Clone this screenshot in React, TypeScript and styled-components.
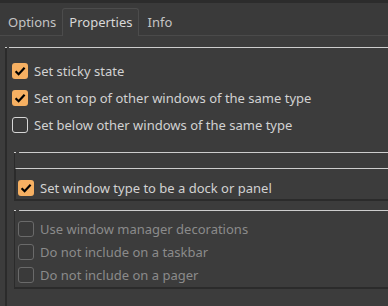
import React from 'react';
import styled, { createGlobalStyle } from 'styled-components';

const GlobalStyle = createGlobalStyle`
  html, body {
    margin: 0;
    padding: 0;
    background: #3c3c3c;
  }
  body {
    font-family: 'Noto Sans', 'Open Sans', sans-serif;
    font-size: 13px;
  }
`;

const light = '#cdcdcd';
const dark = '#2b2b2b';

const Window = styled.div`
  width: 388px;
  height: 306px;
  overflow: hidden;
  background: #3c3c3c;
`;

const TopBand = styled.div`
  height: 3px;
  background: #2c2c2c;
`;

const TabBar = styled.div`
  height: 32px;
  display: flex;
  align-items: flex-end;
  background: #3a3a3a;
  border-bottom: 1px solid #4a4a4a;
`;

const Tab = styled.div<{ $active?: boolean }>`
  box-sizing: border-box;
  height: ${(p) => (p.$active ? '28px' : '27px')};
  margin-bottom: ${(p) => (p.$active ? '-1px' : '0')};
  padding: ${(p) => (p.$active ? '0 6px 1px 6px' : '0 5px 0 7px')};
  display: flex;
  align-items: center;
  color: ${(p) => (p.$active ? '#d8d8d8' : '#c4c4c4')};
  background: ${(p) => (p.$active ? '#3c3c3c' : 'transparent')};
  border: ${(p) => (p.$active ? '1px solid #4c4c4c' : '1px solid transparent')};
  border-bottom: none;
  border-radius: 3px 3px 0 0;
`;

const Content = styled.div`
  padding: 11px 0 0 5px;
`;

const FrameTop = styled.div<{ $gap?: number }>`
  display: flex;
  height: 1px;
  gap: ${(p) => p.$gap ?? 2}px;
`;

const Dash = styled.div`
  width: 2px;
  background: ${light};
`;

const Line = styled.div`
  flex: 1;
  background: ${light};
`;

const OuterBody = styled.div`
  border-left: 2px solid ${dark};
  padding: 9px 0 0 5px;
  height: 300px;
`;

const SubFrame = styled.div<{ $top: number }>`
  margin: ${(p) => p.$top}px 0 0 2px;
`;

const SubBody = styled.div<{ $bottom?: boolean }>`
  border-left: 1px solid ${dark};
  border-bottom: ${(p) => (p.$bottom ? `2px solid ${dark}` : 'none')};
  padding: ${(p) => (p.$bottom ? '6px 0 1px 3px' : '15px 0 0 0')};
`;

const DockBox = styled.div`
  border-top: 1px solid ${light};
  border-left: 1px solid ${dark};
  border-bottom: 2px solid ${dark};
  padding: 10px 0 2px 2px;
`;

const Row = styled.div<{ $h: number }>`
  height: ${(p) => p.$h}px;
  display: flex;
  align-items: center;
  gap: 6px;
`;

const Label = styled.span<{ $disabled?: boolean }>`
  color: ${(p) => (p.$disabled ? '#8b8b8b' : '#d2d2d2')};
  white-space: nowrap;
`;

const Box = styled.div<{ $checked?: boolean; $disabled?: boolean }>`
  box-sizing: border-box;
  width: 16px;
  height: 16px;
  flex: none;
  border-radius: 3px;
  display: flex;
  align-items: center;
  justify-content: center;
  background: ${(p) => (p.$checked ? '#f6b062' : '#3a3a3a')};
  border: ${(p) =>
    p.$checked ? 'none' : `1px solid ${p.$disabled ? '#6a6a6a' : '#d6d6d6'}`};
`;

const Check = () => (
  <svg width="12" height="12" viewBox="0 0 12 12">
    <path d="M1.6 6.2 L4.6 9.2 L10.6 2.8" fill="none" stroke="#000" strokeWidth="2.2" />
  </svg>
);

interface CheckRowProps {
  label: string;
  checked?: boolean;
  disabled?: boolean;
  h: number;
}

const CheckRow = ({ label, checked, disabled, h }: CheckRowProps) => (
  <Row $h={h}>
    <Box $checked={checked} $disabled={disabled}>
      {checked && <Check />}
    </Box>
    <Label $disabled={disabled}>{label}</Label>
  </Row>
);

const App = () => (
  <Window>
    <GlobalStyle />
    <TopBand />
    <TabBar>
      <Tab>Options</Tab>
      <Tab $active>Properties</Tab>
      <Tab>Info</Tab>
    </TabBar>
    <Content>
      <FrameTop>
        <Dash />
        <Line />
      </FrameTop>
      <OuterBody>
        <CheckRow h={27} checked label="Set sticky state" />
        <CheckRow h={27} checked label="Set on top of other windows of the same type" />
        <CheckRow h={27} label="Set below other windows of the same type" />
        <SubFrame $top={14}>
          <FrameTop $gap={3}>
            <Dash />
            <Line />
          </FrameTop>
          <SubBody>
            <DockBox>
              <CheckRow h={18} checked label="Set window type to be a dock or panel" />
            </DockBox>
          </SubBody>
        </SubFrame>
        <SubFrame $top={9}>
          <FrameTop $gap={3}>
            <Dash />
            <Line />
          </FrameTop>
          <SubBody $bottom>
            <CheckRow h={23} disabled label="Use window manager decorations" />
            <CheckRow h={23} disabled label="Do not include on a taskbar" />
            <CheckRow h={23} disabled label="Do not include on a pager" />
          </SubBody>
        </SubFrame>
      </OuterBody>
    </Content>
  </Window>
);

export default App;
